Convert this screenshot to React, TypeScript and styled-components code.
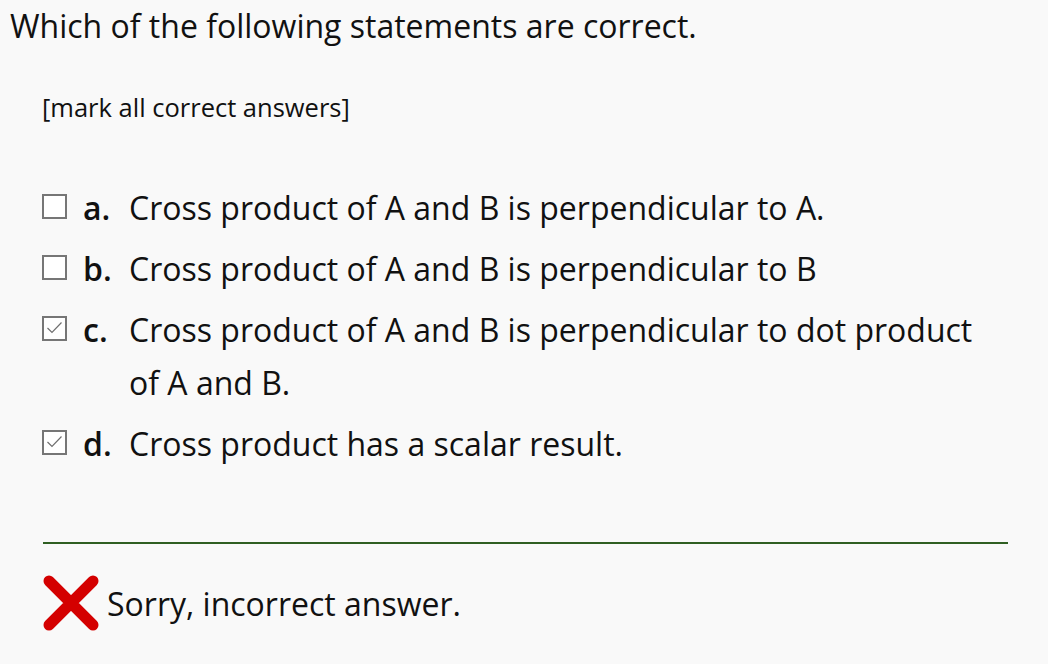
import React from "react";
import styled, { createGlobalStyle } from "styled-components";

const Global = createGlobalStyle`
  html, body { margin: 0; padding: 0; background: #f9f9f9; }
  body { font-family: "Open Sans", "Noto Sans", sans-serif; color: #111; }
`;

const Page = styled.div`
  width: 1048px;
  height: 664px;
  background: #f9f9f9;
  box-sizing: border-box;
  padding: 4px 10px 0 10px;
  overflow: hidden;
`;

const Question = styled.div`
  font-size: 32px;
  line-height: 44px;
  color: #111;
`;

const Hint = styled.div`
  margin: 43px 0 0 32px;
  font-size: 25.5px;
  line-height: 32px;
  color: #111;
`;

const Options = styled.div`
  margin: 58px 0 0 32px;
  display: flex;
  flex-direction: column;
  gap: 8px;
`;

const Option = styled.div`
  display: flex;
  align-items: flex-start;
  font-size: 32px;
  line-height: 53px;
`;

const Box = styled.span`
  flex: none;
  width: 21px;
  height: 21px;
  border: 2px solid #767676;
  background: #fff;
  margin-top: 13px;
  display: flex;
  align-items: center;
  justify-content: center;
`;

const Letter = styled.span`
  flex: none;
  width: 46px;
  margin-left: 16px;
  font-weight: 600;
`;

const Text = styled.span`
  flex: none;
  width: 880px;
`;

const Rule = styled.div`
  margin: 72px 30px 0 33px;
  height: 2px;
  background: #2f5f22;
`;

const Feedback = styled.div`
  margin: 31px 0 0 33px;
  display: flex;
  align-items: center;
  gap: 8px;
  font-size: 32px;
`;

const Check = () => (
  <svg width="21" height="21" viewBox="0 0 21 21">
    <path d="M3.5 10 L8 14.5 L17.5 4.5" fill="none" stroke="#6f6f6f" strokeWidth="1.2" />
  </svg>
);

const Cross = () => (
  <svg width="56" height="56" viewBox="0 0 56 56">
    <path d="M6 6 L50 50 M50 6 L6 50" stroke="#d40000" strokeWidth="11" strokeLinecap="round" />
  </svg>
);

const items = [
  { l: "a.", t: "Cross product of A and B is perpendicular to A.", c: false },
  { l: "b.", t: "Cross product of A and B is perpendicular to B", c: false },
  { l: "c.", t: "Cross product of A and B is perpendicular to dot product of A and B.", c: true },
  { l: "d.", t: "Cross product has a scalar result.", c: true },
];

export default function App() {
  return (
    <Page>
      <Global />
      <Question>Which of the following statements are correct.</Question>
      <Hint>[mark all correct answers]</Hint>
      <Options>
        {items.map((it) => (
          <Option key={it.l}>
            <Box>{it.c && <Check />}</Box>
            <Letter>{it.l}</Letter>
            <Text>{it.t}</Text>
          </Option>
        ))}
      </Options>
      <Rule />
      <Feedback>
        <Cross />
        <span>Sorry, incorrect answer.</span>
      </Feedback>
    </Page>
  );
}
